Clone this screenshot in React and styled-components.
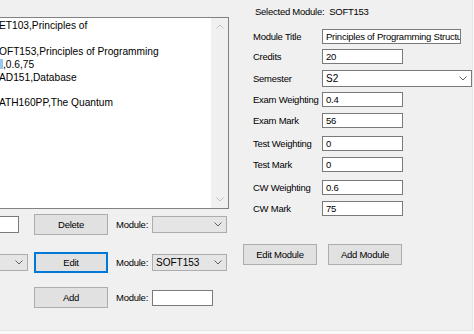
import React from "react";
import styled, { createGlobalStyle } from "styled-components";

const GlobalStyle = createGlobalStyle`
  body {
    margin: 0;
    background: #f9f9f9;
    overflow: hidden;
  }
`;

const Window = styled.div`
  display: flex;
  width: 472px;
  height: 330px;
  background: #f0f0f0;
  border-right: 1px solid #e6e6e6;
  border-bottom: 1px solid #e6e6e6;
  font-family: "Liberation Sans", Arial, sans-serif;
  font-size: 9.5px;
  letter-spacing: -0.25px;
  color: #000;
  overflow: hidden;
`;

const LeftColumn = styled.div`
  width: 240px;
  padding-top: 17px;
  display: flex;
  flex-direction: column;
`;

const ListBox = styled.div`
  display: flex;
  width: 228px;
  height: 190px;
  background: #fff;
  border: 1px solid #828282;
  border-left: none;
`;

const ListItems = styled.div`
  flex: 1;
  padding-top: 2px;
  font-size: 10.2px;
  letter-spacing: 0;
  line-height: 12.9px;
  white-space: pre;
  overflow: hidden;
`;

const ListLine = styled.div`
  height: 12.9px;
  margin-left: -1px;
`;

const SelBit = styled.span`
  display: inline-block;
  width: 4px;
  height: 10px;
  vertical-align: -1px;
  background: #99c9ef;
`;

const ScrollBar = styled.div`
  width: 17px;
  background: #f0f0f0;
  display: flex;
  flex-direction: column;
  justify-content: space-between;
  align-items: center;
  padding: 6px 0;
`;

const ControlRow = styled.div`
  display: grid;
  grid-template-columns: 34px 74px 44px 75px;
  align-items: center;
  height: 21px;
  margin-top: ${(p) => p.$mt}px;
`;

const Button = styled.div`
  height: ${(p) => p.$h || 21}px;
  width: ${(p) => p.$w || 74}px;
  box-sizing: border-box;
  background: #e1e1e1;
  border: 1px solid ${(p) => (p.$focus ? "#0078d7" : "#adadad")};
  box-shadow: ${(p) => (p.$focus ? "inset 0 0 0 1px #0078d7" : "none")};
  display: flex;
  align-items: center;
  justify-content: center;
`;

const RowLabel = styled.div`
  padding-left: 8px;
`;

const TextBox = styled.div`
  width: ${(p) => p.$w}px;
  height: ${(p) => p.$h || 15}px;
  box-sizing: border-box;
  background: #fff;
  border: 1px solid #7a7a7a;
  border-left: ${(p) => (p.$cut ? "none" : "1px solid #7a7a7a")};
  padding-left: 3px;
  display: flex;
  align-items: center;
  white-space: nowrap;
  overflow: hidden;
`;

const Combo = styled.div`
  width: ${(p) => p.$w}px;
  height: 17px;
  box-sizing: border-box;
  background: ${(p) => (p.$white ? "#fff" : "#e5e5e5")};
  border: 1px solid ${(p) => (p.$white ? "#7a7a7a" : "#acacac")};
  border-left: ${(p) => (p.$cut ? "none" : `1px solid ${p.$white ? "#7a7a7a" : "#acacac"}`)};
  padding: 0 4px 0 3px;
  display: flex;
  align-items: center;
  justify-content: space-between;
  font-size: 10px;
  letter-spacing: 0;
`;

const RightPanel = styled.div`
  flex: 1;
  padding: 6px 0 0 15px;
  display: flex;
  flex-direction: column;
`;

const Heading = styled.div`
  height: 11px;
  line-height: 11px;
  padding-left: 2px;
`;

const Field = styled.div`
  display: flex;
  align-items: center;
  margin-top: ${(p) => p.$mt}px;
`;

const FieldLabel = styled.div`
  width: 69px;
  flex-shrink: 0;
`;

const ButtonRow = styled.div`
  display: flex;
  gap: 11px;
  margin-top: 28px;
  margin-left: -10px;
`;

const Chevron = ({ color = "#606060" }) => (
  <svg width="8" height="5" viewBox="0 0 8 5">
    <polyline points="0.5,0.5 4,4 7.5,0.5" fill="none" stroke={color} strokeWidth="1" />
  </svg>
);

const ChevronUp = () => (
  <svg width="8" height="5" viewBox="0 0 8 5">
    <polyline points="0.5,4.5 4,1 7.5,4.5" fill="none" stroke="#c2c2c2" strokeWidth="1" />
  </svg>
);

const fields = [
  { label: "Module Title", value: "Principles of Programming Structures", w: 139, mt: 12 },
  { label: "Credits", value: "20", w: 81, mt: 5 },
  { label: "Semester", value: "S2", w: 150, mt: 6, combo: true },
  { label: "Exam Weighting", value: "0.4", w: 81, mt: 5 },
  { label: "Exam Mark", value: "56", w: 81, mt: 6 },
  { label: "Test Weighting", value: "0", w: 81, mt: 8 },
  { label: "Test Mark", value: "0", w: 81, mt: 6 },
  { label: "CW Weighting", value: "0.6", w: 81, mt: 8 },
  { label: "CW Mark", value: "75", w: 81, mt: 6 },
];

const App = () => {
  return (
    <>
      <GlobalStyle />
      <Window>
        <LeftColumn>
          <ListBox>
            <ListItems>
              <ListLine>ET103,Principles of</ListLine>
              <ListLine> </ListLine>
              <ListLine>OFT153,Principles of Programming</ListLine>
              <ListLine>
                <SelBit />,0.6,75
              </ListLine>
              <ListLine>AD151,Database</ListLine>
              <ListLine> </ListLine>
              <ListLine>ATH160PP,The Quantum</ListLine>
            </ListItems>
            <ScrollBar>
              <ChevronUp />
              <Chevron color="#c2c2c2" />
            </ScrollBar>
          </ListBox>

          <ControlRow $mt={5}>
            <TextBox $w={19} $h={17} $cut />
            <Button>Delete</Button>
            <RowLabel>Module:</RowLabel>
            <Combo $w={75}>
              <span />
              <Chevron />
            </Combo>
          </ControlRow>

          <ControlRow $mt={17}>
            <Combo $w={28} $cut>
              <span />
              <Chevron />
            </Combo>
            <Button $focus>Edit</Button>
            <RowLabel>Module:</RowLabel>
            <Combo $w={75}>
              <span>SOFT153</span>
              <Chevron />
            </Combo>
          </ControlRow>

          <ControlRow $mt={14}>
            <span />
            <Button>Add</Button>
            <RowLabel>Module:</RowLabel>
            <TextBox $w={61} $h={16} />
          </ControlRow>
        </LeftColumn>

        <RightPanel>
          <Heading>Selected Module:&nbsp; SOFT153</Heading>
          {fields.map((f) => (
            <Field key={f.label} $mt={f.mt}>
              <FieldLabel>{f.label}</FieldLabel>
              {f.combo ? (
                <Combo $w={f.w} $white>
                  <span>{f.value}</span>
                  <Chevron />
                </Combo>
              ) : (
                <TextBox $w={f.w}>{f.value}</TextBox>
              )}
            </Field>
          ))}
          <ButtonRow>
            <Button>Edit Module</Button>
            <Button>Add Module</Button>
          </ButtonRow>
        </RightPanel>
      </Window>
    </>
  );
};

export default App;
